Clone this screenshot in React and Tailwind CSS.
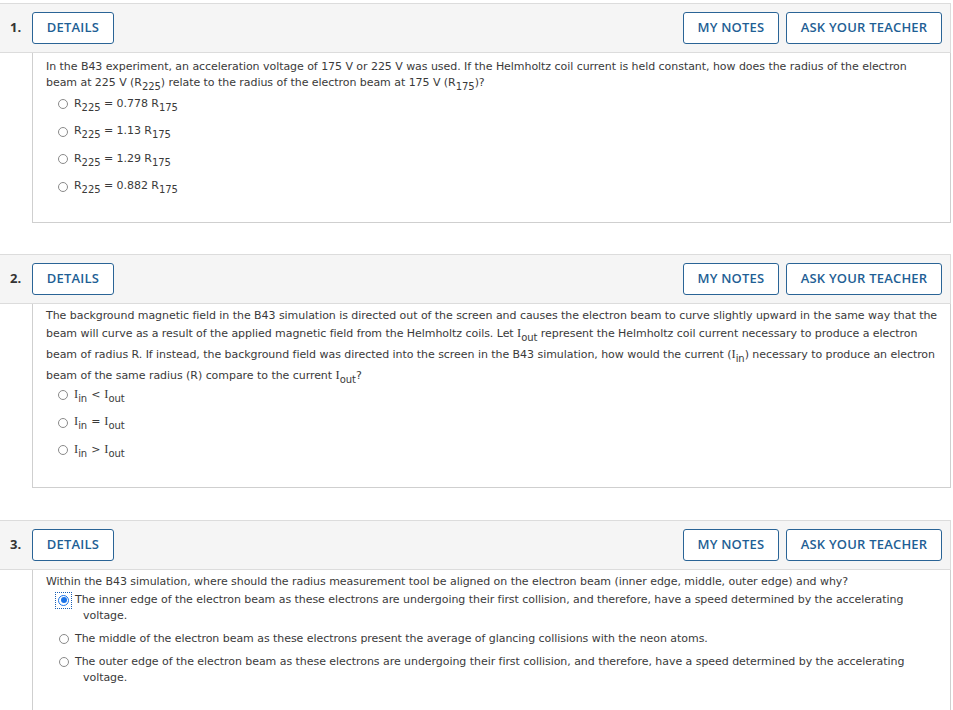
import React from "react";

const body = { fontFamily: '"DejaVu Sans", Verdana, sans-serif' };
const btnFont = { fontFamily: '"Open Sans", "Noto Sans", sans-serif' };
const serif = { fontFamily: '"Liberation Serif", "Times New Roman", serif' };

function Sub({ children }) {
  return <span className="relative top-[4px] text-[10px] leading-none">{children}</span>;
}

function Btn({ children, className = "" }) {
  return (
    <div
      style={btnFont}
      className={`h-[32px] flex items-center justify-center border border-[#2a6496] rounded-[3px] bg-white text-[#1f5f95] text-[13px] font-semibold tracking-[0.2px] ${className}`}
    >
      {children}
    </div>
  );
}

function Header({ num }) {
  return (
    <div className="h-[50px] border-t border-b border-r border-[#dcdcdc] bg-[#f5f5f5] flex items-center">
      <div style={btnFont} className="w-[32px] pl-[10px] text-[13px] font-bold text-[#333]">
        {num}
      </div>
      <Btn className="w-[82px]">DETAILS</Btn>
      <div className="flex-1" />
      <Btn className="w-[96px]">MY NOTES</Btn>
      <Btn className="w-[156px] ml-[7px] mr-[8px]">ASK YOUR TEACHER</Btn>
    </div>
  );
}

function Radio({ checked }) {
  if (checked) {
    return (
      <span className="flex items-center justify-center w-[17px] h-[17px] border border-dotted border-[#1a5fb4]">
        <span className="w-[11px] h-[11px] rounded-full border border-[#1a73e8] bg-white flex items-center justify-center">
          <span className="w-[6px] h-[6px] rounded-full bg-[#1a73e8]" />
        </span>
      </span>
    );
  }
  return <span className="block w-[10px] h-[10px] rounded-full border border-[#8a8a8a] bg-white" />;
}

function R({ a, b, c }) {
  return (
    <span>
      R<Sub>{a}</Sub> = {b} R<Sub>{c}</Sub>
    </span>
  );
}

function I({ s }) {
  return (
    <span>
      <span style={serif} className="text-[12.5px] leading-none">I</span>
      <Sub>{s}</Sub>
    </span>
  );
}

function Opt({ children }) {
  return (
    <div className="flex items-center h-[16px]">
      <span className="mr-[6px] flex items-center">
        <Radio />
      </span>
      {children}
    </div>
  );
}

export default function App() {
  return (
    <div style={body} className="w-[953px] h-[710px] bg-white text-[#3a3a3a] overflow-hidden pt-[3px] tracking-[-0.05px]">
      {/* Question 1 */}
      <div className="w-[951px]">
        <Header num="1." />
        <div className="ml-[32px] border-l border-r border-b border-[#cfcfcf] h-[170px] pl-[13px] pt-[6px] text-[11px]">
          <div className="leading-[16px]">
            In the B43 experiment, an acceleration voltage of 175 V or 225 V was used. If the Helmholtz coil current is held constant, how does the radius of the electron
            <br />
            beam at 225 V (R<Sub>225</Sub>) relate to the radius of the electron beam at 175 V (R<Sub>175</Sub>)?
          </div>
          <div className="pl-[12px] mt-[5px] flex flex-col gap-[11.5px]">
            <Opt><R a="225" b="0.778" c="175" /></Opt>
            <Opt><R a="225" b="1.13" c="175" /></Opt>
            <Opt><R a="225" b="1.29" c="175" /></Opt>
            <Opt><R a="225" b="0.882" c="175" /></Opt>
          </div>
        </div>
      </div>

      {/* Question 2 */}
      <div className="w-[951px] mt-[31px]">
        <Header num="2." />
        <div className="ml-[32px] border-l border-r border-b border-[#cfcfcf] h-[184px] pl-[13px] pt-[3px] text-[11px]">
          <div className="leading-[18px]">
            <div className="h-[18px]">
              The background magnetic field in the B43 simulation is directed out of the screen and causes the electron beam to curve slightly upward in the same way that the
            </div>
            <div className="h-[21px]">
              beam will curve as a result of the applied magnetic field from the Helmholtz coils. Let <I s="out" /> represent the Helmholtz coil current necessary to produce a electron
            </div>
            <div className="h-[21px]">
              beam of radius R. If instead, the background field was directed into the screen in the B43 simulation, how would the current (<I s="in" />) necessary to produce an electron
            </div>
            <div className="h-[18px]">
              beam of the same radius (R) compare to the current <I s="out" />?
            </div>
          </div>
          <div className="pl-[12px] mt-[2px] flex flex-col gap-[11.5px]">
            <Opt><I s="in" /><span className="mx-[4px]">&lt;</span><I s="out" /></Opt>
            <Opt><I s="in" /><span className="mx-[4px]">=</span><I s="out" /></Opt>
            <Opt><I s="in" /><span className="mx-[4px]">&gt;</span><I s="out" /></Opt>
          </div>
        </div>
      </div>

      {/* Question 3 */}
      <div className="w-[951px] mt-[32px]">
        <Header num="3." />
        <div className="ml-[32px] border-l border-r border-[#cfcfcf] h-[200px] pl-[13px] pt-[4px] text-[11px]">
          <div className="leading-[16px]">
            Within the B43 simulation, where should the radius measurement tool be aligned on the electron beam (inner edge, middle, outer edge) and why?
          </div>
          <div className="pl-[9px] mt-[2px] flex flex-col gap-[7px] leading-[16px]">
            <div className="flex items-start">
              <span className="h-[16px] flex items-center mr-[3px]"><Radio checked /></span>
              <div>
                The inner edge of the electron beam as these electrons are undergoing their first collision, and therefore, have a speed determined by the accelerating
                <br />
                <span className="pl-[8px]">voltage.</span>
              </div>
            </div>
            <div className="flex items-start pl-[4px]">
              <span className="h-[16px] flex items-center mr-[6px]"><Radio /></span>
              <div>The middle of the electron beam as these electrons present the average of glancing collisions with the neon atoms.</div>
            </div>
            <div className="flex items-start pl-[4px]">
              <span className="h-[16px] flex items-center mr-[6px]"><Radio /></span>
              <div>
                The outer edge of the electron beam as these electrons are undergoing their first collision, and therefore, have a speed determined by the accelerating
                <br />
                <span className="pl-[8px]">voltage.</span>
              </div>
            </div>
          </div>
        </div>
      </div>
    </div>
  );
}
